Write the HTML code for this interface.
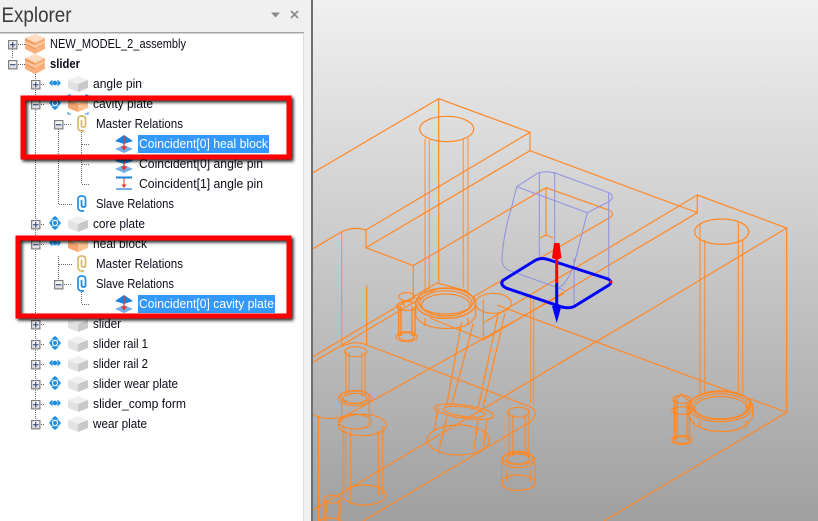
<!DOCTYPE html>
<html><head><meta charset="utf-8"><style>
html,body{margin:0;padding:0;background:#fff;width:818px;height:521px;overflow:hidden}
svg{display:block}
text{font-family:"Liberation Sans",sans-serif;font-size:12.5px;fill:#0c0c18}
</style></head><body>
<svg width="818" height="521" viewBox="0 0 818 521" xmlns="http://www.w3.org/2000/svg">
<defs>
<linearGradient id="vp" x1="0" y1="0" x2="0" y2="1"><stop offset="0" stop-color="#f0f0f0"/><stop offset="1" stop-color="#a0a0a0"/></linearGradient>
<linearGradient id="bx" x1="0" y1="0" x2="0" y2="1"><stop offset="0" stop-color="#fff"/><stop offset="1" stop-color="#d8d8d8"/></linearGradient>
<filter id="sh" x="-5%" y="-10%" width="110%" height="125%"><feDropShadow dx="2" dy="2" stdDeviation="1.6" flood-color="#000" flood-opacity=".85"/></filter>
<g id="cube"><path d="M0 4 10 0 20 4 10 8Z" fill="#f0f0f0"/><path d="M0 4 10 8V16L0 12Z" fill="#e2e2e2"/><path d="M20 4 10 8V16L20 12Z" fill="#c9c9c9"/></g>
<g id="ocube"><path d="M0 4 10 0 20 4 10 8Z" fill="#ffd9b8"/><path d="M0 4 10 8V16L0 12Z" fill="#f5a56d"/><path d="M20 4 10 8V16L20 12Z" fill="#ffc08e"/></g>
<g id="asm"><path d="M0 12 10 8 20 12V15L10 20 0 15Z" fill="#f9b07c"/><path d="M0 8 10 4 20 8V11L10 15 0 11Z" fill="#ffc79d"/><path d="M0 4 10 0 20 4 10 9Z" fill="#ffdcc0"/><path d="M0 4 10 9V11L0 7Z M0 9 10 14V15.500L0 11Z" fill="#f09a5e"/><path d="M20 4 10 9V11L20 7Z M20 9 10 14V15.500L20 11Z" fill="#f8ab74"/></g>
<g id="dofh" fill="#1b8fe6"><path d="M0 0 3.500 -3.500V3.500Z"/><path d="M12 0 8.500 -3.500V3.500Z"/><circle cx="6" cy="0" r="2.300"/></g>
<g id="dofa" fill="#1b8fe6"><path d="M0 0 3 -3.500V3.500Z"/><path d="M12 0 9 -3.500V3.500Z"/><path d="M6 -7 2 -3.800H10Z"/><path d="M6 7 2 3.800H10Z"/><circle cx="6" cy="0" r="2"/><circle cx="6" cy="0" r="3.600" fill="none" stroke="#1b8fe6" stroke-width=".8"/></g>
<g id="plus"><rect x=".6" y=".6" width="8.300" height="8.300" fill="url(#bx)" stroke="#808080" stroke-width="1.200"/><path d="M2 4.750H7.500M4.750 2V7.500" stroke="#2a3f7a" fill="none" stroke-width="1.100"/></g>
<g id="minus"><rect x=".6" y=".6" width="8.300" height="8.300" fill="url(#bx)" stroke="#808080" stroke-width="1.200"/><path d="M2 4.750H7.500" stroke="#2a3f7a" fill="none" stroke-width="1.100"/></g>
<path id="clip" d="M1 4V12Q1 16 5 16H7M1 4Q1 1 4.800 1T8.500 4V10.500Q8.500 12 6.500 12T4.500 10.500V5" fill="none" stroke-width="1.700"/>
<g id="coin"><path d="M0 6 9 0 18 6 9 9Z" fill="#1784dd"/><path d="M0 14 9 10 18 14 9 18Z" fill="#74afe6"/><path d="M9 1V14" stroke="#e8332a" stroke-width="1.200"/><path d="M6 11.500H12L9 15.500Z" fill="#e8332a"/></g>
<g id="coinb"><path d="M0 .5H16" stroke="#1784dd" stroke-width="2" fill="none"/><path d="M0 12H16" stroke="#74afe6" stroke-width="2" fill="none"/><path d="M8 1V10" stroke="#e8332a"/><path d="M5.500 7.500H10.500L8 11Z" fill="#e8332a"/></g>
</defs>

<rect width="818" height="521" fill="#f0f0f0"/>
<rect x="0" y="33" width="303" height="488" fill="#fff"/>
<rect x="0" y="32" width="304" height="1.500" fill="#a6a6a6"/>
<rect x="303" y="33" width="1" height="488" fill="#dcdcdc"/>
<rect x="311" y="0" width="2" height="521" fill="#6f6f6f"/>
<rect x="313" y="0" width="505" height="521" fill="url(#vp)"/>

<text x="1.500" y="22" style="font-size:21px;fill:#3a3a3a" textLength="70" lengthAdjust="spacingAndGlyphs">Explorer</text>
<path d="M271 12.500H280L275.500 17.500Z" fill="#8a8a8a"/>
<path d="M291 11 298 18M298 11 291 18" stroke="#8a8a8a" stroke-width="1.600" fill="none"/>

<!-- tree lines -->
<g stroke="#666" stroke-dasharray="1 1" fill="none">
<path d="M12.500 49V59"/><path d="M35.500 70V421"/><path d="M58.500 129V204"/><path d="M58.500 256V284"/>
<path d="M81.500 130V184"/><path d="M81.500 290V304"/>
<path d="M18 44.500H25M18 64.500H25M41 84.500H45M41 104.500H45M41 224.500H45M41 244.500H45M41 324.500H45M41 344.500H45M41 364.500H45M41 384.500H45M41 404.500H45M41 424.500H45"/>
<path d="M64 124.500H72M59 204.500H72M59 264.500H72M64 284.500H72"/>
<path d="M82 144.500H90M82 164.500H90M82 184.500H90M82 304.500H90"/>
</g>

<!-- expanders -->
<use href="#plus" x="8" y="40"/><use href="#minus" x="8" y="60"/>
<use href="#plus" x="31" y="80"/><use href="#minus" x="31" y="100"/><use href="#plus" x="31" y="220"/><use href="#minus" x="31" y="240"/>
<use href="#plus" x="31" y="320"/><use href="#plus" x="31" y="340"/><use href="#plus" x="31" y="360"/><use href="#plus" x="31" y="380"/><use href="#plus" x="31" y="400"/><use href="#plus" x="31" y="420"/>
<use href="#minus" x="54" y="120"/><use href="#minus" x="54" y="280"/>

<!-- icons -->
<use href="#asm" x="25" y="34"/><use href="#asm" x="25" y="54"/>
<use href="#cube" x="68" y="76"/><use href="#ocube" x="68" y="96"/><use href="#cube" x="68" y="216"/><use href="#ocube" x="68" y="236"/>
<use href="#cube" x="68" y="316"/><use href="#cube" x="68" y="336"/><use href="#cube" x="68" y="356"/><use href="#cube" x="68" y="376"/><use href="#cube" x="68" y="396"/><use href="#cube" x="68" y="416"/>
<path d="M68 95H71M85 95H88M68 95V97M88 95V97M68 112V114H71M88 112V114H85" stroke="#2f94e0" fill="none"/>
<use href="#dofh" x="49" y="83"/><use href="#dofa" x="49" y="103"/><use href="#dofa" x="49" y="223"/><use href="#dofh" x="49" y="243"/>
<use href="#dofa" x="49" y="343"/><use href="#dofh" x="49" y="363"/><use href="#dofa" x="49" y="383"/><use href="#dofh" x="49" y="403"/><use href="#dofa" x="49" y="423"/>
<use href="#clip" x="77" y="115" stroke="#d6b868"/><use href="#clip" x="77" y="195" stroke="#1e8be2"/><use href="#clip" x="77" y="255" stroke="#d6b868"/><use href="#clip" x="77" y="275" stroke="#1e8be2"/>
<use href="#coin" x="115" y="135"/><use href="#coin" x="115" y="155"/><use href="#coinb" x="116" y="177"/><use href="#coin" x="115" y="295"/>

<!-- selection -->
<rect x="138" y="135" width="131" height="18" fill="#3399ff"/>
<rect x="138" y="295" width="137" height="18" fill="#3399ff"/>

<!-- labels -->
<text x="50" y="48" textLength="136" lengthAdjust="spacingAndGlyphs">NEW_MODEL_2_assembly</text>
<text x="50" y="68" font-weight="bold" textLength="30" lengthAdjust="spacingAndGlyphs">slider</text>
<text x="93" y="88" textLength="49" lengthAdjust="spacingAndGlyphs">angle pin</text>
<text x="93" y="108" textLength="60" lengthAdjust="spacingAndGlyphs">cavity plate</text>
<text x="96" y="128" textLength="87" lengthAdjust="spacingAndGlyphs">Master Relations</text>
<text x="139" y="148" style="fill:#fff" textLength="129" lengthAdjust="spacingAndGlyphs">Coincident[0] heal block</text>
<text x="139" y="168" textLength="124" lengthAdjust="spacingAndGlyphs">Coincident[0] angle pin</text>
<text x="139" y="188" textLength="124" lengthAdjust="spacingAndGlyphs">Coincident[1] angle pin</text>
<text x="96" y="208" textLength="78" lengthAdjust="spacingAndGlyphs">Slave Relations</text>
<text x="93" y="228" textLength="52" lengthAdjust="spacingAndGlyphs">core plate</text>
<text x="93" y="248" textLength="54" lengthAdjust="spacingAndGlyphs">heal block</text>
<text x="96" y="268" textLength="87" lengthAdjust="spacingAndGlyphs">Master Relations</text>
<text x="96" y="288" textLength="78" lengthAdjust="spacingAndGlyphs">Slave Relations</text>
<text x="139" y="308" style="fill:#fff" textLength="135" lengthAdjust="spacingAndGlyphs">Coincident[0] cavity plate</text>
<text x="93" y="328" textLength="28" lengthAdjust="spacingAndGlyphs">slider</text>
<text x="93" y="348" textLength="55" lengthAdjust="spacingAndGlyphs">slider rail 1</text>
<text x="93" y="368" textLength="55" lengthAdjust="spacingAndGlyphs">slider rail 2</text>
<text x="93" y="388" textLength="85" lengthAdjust="spacingAndGlyphs">slider wear plate</text>
<text x="93" y="408" textLength="93" lengthAdjust="spacingAndGlyphs">slider_comp form</text>
<text x="93" y="428" textLength="54" lengthAdjust="spacingAndGlyphs">wear plate</text>

<!-- red boxes -->
<rect x="23" y="98" width="266" height="59" fill="none" stroke="#ff0000" stroke-width="5" filter="url(#sh)"/>
<rect x="18" y="238" width="271" height="78" fill="none" stroke="#ff0000" stroke-width="5" filter="url(#sh)"/>

<!-- wireframe -->
<svg x="313" y="0" width="505" height="521" viewBox="313 0 505 521">
<g fill="none" stroke="#ff8826" stroke-width="1.200">
<!-- upper plate -->
<path d="M313 172.700 438.700 98.700 530 132.300V150.700L366 247.700V230L530 132.300"/>
<path d="M530 150.700 697.300 212.700V195L483.300 323"/>
<path d="M697.300 212.700 483.300 340V300"/>
<path d="M697.300 195 786.700 228 650 310 564 360.700 313 510"/>
<path d="M366 247.700 413.300 265.700V298"/>
<path d="M413.300 265.700 546 187.700V235"/>
<path d="M546 187.700 608.700 210Q616 214 609 218L473 297"/>
<path d="M540 238 546 235 553 238"/>
<path d="M313 248.700 341.700 231.700Q353 226 366 230"/>
<path d="M341.700 231.700V346.500" opacity=".8"/>
<path d="M366.700 285V345L530 406.700Q541 412 530 422L363 521"/>
<path d="M341.700 346.500Q355 340 366.700 345"/>
<path d="M313 356.700 430 287M313 362.300 436 289"/>
<path d="M313 415Q330 422 347 415L564 293.300"/>
<path d="M318.300 417V521"/>
<path d="M786.700 228V412.300L564 330 497 305"/>
<path d="M786.700 412.300 604 521"/>
<path d="M413 297 437 283 467 291"/>
<path d="M438.700 98.700V283"/>
<path d="M484 340 430 318"/>
<!-- top-left column -->
<ellipse cx="446.700" cy="129" rx="27" ry="12.700"/>
<path d="M425 139V292M429.300 140V290M463.300 140V288M468 138V296" opacity=".75"/>
<!-- top-right column -->
<ellipse cx="721.700" cy="231.700" rx="27" ry="12.700"/>
<path d="M700 223V395M704.700 240V393M738.300 222V395M742.700 240V395" opacity=".85"/>
<!-- bottom-right ring -->
<ellipse cx="720.700" cy="406.700" rx="32" ry="15"/><ellipse cx="720.700" cy="406.700" rx="28" ry="13"/><ellipse cx="720.700" cy="408" rx="26" ry="11.500"/><ellipse cx="720.700" cy="405" rx="30" ry="14" stroke-width="1.500"/>
<path d="M688.700 407V416Q695 431 720.700 431.500T752.700 416V407M700 420V428M746 420V428"/>
<!-- small pin right -->
<ellipse cx="681.700" cy="399.300" rx="9" ry="4"/><ellipse cx="681.700" cy="410.500" rx="10" ry="4"/><ellipse cx="682" cy="440" rx="10" ry="4.500"/><ellipse cx="682" cy="440" rx="7.500" ry="3.500"/>
<path d="M675 400 681.500 394 688 400M674.500 400V440M677 400V440M687 402V440M689.500 400V440" stroke-width="1.500"/>
<!-- centre ring -->
<ellipse cx="445.700" cy="303.300" rx="30" ry="15" stroke-width="1.500"/><ellipse cx="445.700" cy="303.300" rx="26" ry="12.500"/><ellipse cx="445.700" cy="305" rx="24" ry="11"/><ellipse cx="445.700" cy="301" rx="28" ry="13"/>
<path d="M415.700 304V316Q422 328 445.700 328.500T475.700 316V304M425 318V326M468 318V325"/>
<ellipse cx="493.300" cy="303.300" rx="18" ry="10"/>
<!-- left top pin -->
<ellipse cx="406.700" cy="296.700" rx="8" ry="4"/><ellipse cx="406.700" cy="306" rx="10" ry="4.500"/><ellipse cx="406.700" cy="336.700" rx="10.500" ry="5"/><ellipse cx="406.700" cy="336.700" rx="7.500" ry="4"/>
<path d="M398.700 306V336M401 306V336M403.700 300V306M412 306V336M415 306V336" stroke-width="1.500"/>
<!-- angle pin -->
<path d="M461.700 321.700 446.700 405M473.300 323.300 451.700 405M505 313 483.300 407M498.300 313 478.300 407"/>
<ellipse cx="464" cy="411.700" rx="30" ry="6.500" transform="rotate(8 464 411.700)"/><ellipse cx="464" cy="411.700" rx="21" ry="4.700" transform="rotate(8 464 411.700)"/>
<ellipse cx="458.300" cy="440" rx="31" ry="15"/>
<path d="M438.300 407 434.300 431M447 417 438.300 453M486.700 420 483.300 447M478 420 474 450"/>
<!-- left lower column -->
<ellipse cx="355.700" cy="351.700" rx="11" ry="5"/>
<path d="M346 352V396M349.300 352V396M361.700 352V396M365 352V396" opacity=".85"/>
<ellipse cx="355" cy="398.300" rx="16.700" ry="7.300"/><ellipse cx="355" cy="398.300" rx="12" ry="5"/><ellipse cx="355" cy="397" rx="14.500" ry="6.500"/>
<ellipse cx="355" cy="421.700" rx="16.700" ry="7.300"/>
<path d="M341.700 400V422M369.300 400V424"/>
<ellipse cx="362.300" cy="425" rx="24" ry="10.700"/>
<ellipse cx="364.300" cy="495" rx="21.700" ry="10"/>
<path d="M343.300 425V494M345.500 430V496M350.700 430V502M378.300 430V495M382.700 425V495" opacity=".8"/>
<!-- small bottom-left -->
<ellipse cx="332.300" cy="499.300" rx="9" ry="4"/>
<path d="M324 500V521M326 500V521M338 500V521M340 500V521"/>
<ellipse cx="330" cy="521" rx="10" ry="3"/>
<!-- middle-bottom pin -->
<ellipse cx="518.300" cy="412.300" rx="11" ry="5"/>
<path d="M509.300 412V458M512.700 415V456M525 415V456M528.300 412V458" opacity=".85"/>
<ellipse cx="518.300" cy="460" rx="16.700" ry="7.700"/><ellipse cx="518.300" cy="458" rx="15" ry="6.500"/><ellipse cx="518.300" cy="459" rx="11.500" ry="5"/>
<ellipse cx="518.300" cy="482.700" rx="16.700" ry="7.700"/>
<path d="M501.700 460V483M535 460V483M507 470V482M530 470V482"/>
<path d="M530.700 296V403M533.700 296V405" opacity=".8"/>
</g>
<!-- ghost -->
<g fill="none" stroke="#8f90e2" stroke-width="1">
<path d="M516.700 186.700 538 173Q547 170 558 174L608.700 192.700Q616 197 608.700 201.700L587.300 212.700 516.700 186.700 511.700 207Q503 235 502 260Q502 266 508 270L564 290"/>
<path d="M587.300 212.700 577 253Q570 283 558 288"/>
<path d="M539.300 173V257M554.700 172V258M608.700 192.700V278M574 258V305"/>
</g>
<!-- gizmo -->
<path d="M503.500 280 535 260.500Q541 257 548 259.500L608 279Q613 282 609 285L575 306Q570 309 562 307L506 288Q499 284 503.500 280Z" fill="none" stroke="#0000ff" stroke-width="3"/>
<path d="M556.700 283V308" stroke="#0000ff" stroke-width="3"/>
<path d="M552 306H561.500L556.700 323Z" fill="#0000ff"/>
<path d="M556.700 283V256" stroke="#ff0000" stroke-width="3"/>
<path d="M552 258 554 243H559.500L561.500 258 556.700 260Z" fill="#ff0000"/>
<circle cx="611" cy="282" r="1.500" fill="#ff0000"/>
</svg>
</svg>
</body></html>
